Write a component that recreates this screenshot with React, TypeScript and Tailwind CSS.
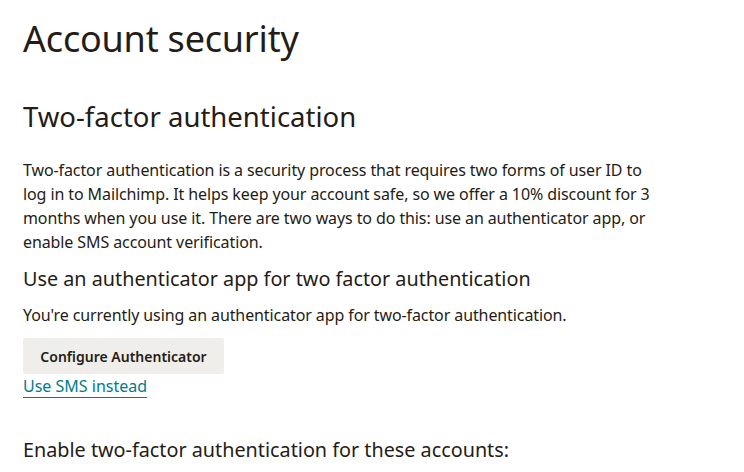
export default function App() {
  return (
    <div className="min-h-[472px] bg-white px-[23px] text-[#241c15]" style={{ fontFamily: '"Noto Sans", "Liberation Sans", sans-serif' }}>
      <h1 className="pt-[15px] text-[36px] leading-[48px] font-normal tracking-[-0.2px]">Account security</h1>
      <h2 className="mt-[36px] text-[27.5px] leading-[36px] font-normal">Two-factor authentication</h2>
      <p className="mt-[23px] text-[16px] leading-[24px] tracking-[-0.1px]">
        Two-factor authentication is a security process that requires two forms of user ID to<br />
        log in to Mailchimp. It helps keep your account safe, so we offer a 10% discount for 3<br />
        months when you use it. There are two ways to do this: use an authenticator app, or<br />
        enable SMS account verification.
      </p>
      <h3 className="mt-[10px] text-[19.8px] leading-[30px] font-normal">Use an authenticator app for two factor authentication</h3>
      <p className="mt-[9px] text-[16px] leading-[24px] tracking-[-0.1px]">You're currently using an authenticator app for two-factor authentication.</p>
      <button className="mt-[11px] h-[36px] w-[201px] rounded-[2px] bg-[#efeeea] text-[14px] font-semibold text-[#241c15]">Configure Authenticator</button>
      <div>
        <a href="#" className="text-[16px] leading-[24px] text-[#007c89] underline underline-offset-[5px] decoration-1">Use SMS instead</a>
      </div>
      <h3 className="mt-[37px] text-[19.8px] leading-[30px] font-normal">Enable two-factor authentication for these accounts:</h3>
    </div>
  );
}
